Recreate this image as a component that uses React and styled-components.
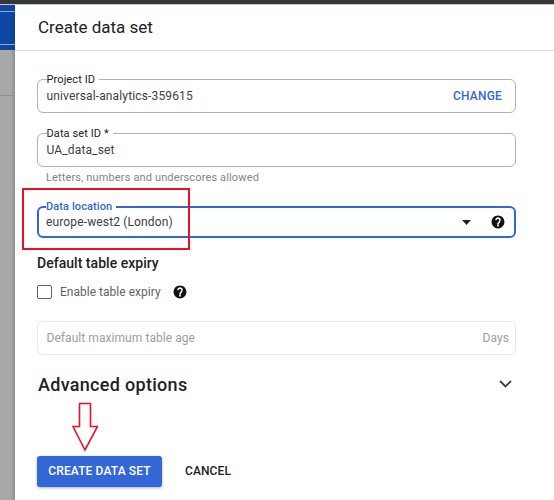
import React from "react";
import styled, { createGlobalStyle } from "styled-components";

const Global = createGlobalStyle`
  html, body { margin: 0; padding: 0; background: #fff; }
  * { box-sizing: border-box; }
  body { font-family: Roboto, "Liberation Sans", sans-serif; color: #202124; }
`;
const Page = styled.div`
  position: relative; width: 554px; height: 500px; overflow: hidden;
  display: flex; flex-direction: column;
`;
const TopBar = styled.div`height: 5px; background: #36373b; flex: none; border-bottom: 1px solid #c9c9cb;`;
const Main = styled.div`flex: 1; display: flex; min-height: 0;`;
const Backdrop = styled.div`
  width: 15px; flex: none; display: flex; flex-direction: column;
  background: linear-gradient(90deg, #a8a8a8 0 11px, #8e8e8e 15px);
`;
const BlueBand = styled.div`
  height: 45px; flex: none; padding-top: 6px;
  background: linear-gradient(90deg, #0d47a1 0 11px, #0b3f8f 15px);
`;
const BlueLine = styled.div`height: 1px; background: #8fa8d0; margin-bottom: ${p => p.$gap || 0}px;`;
const GrayLine = styled.div`height: 1px; margin-top: 45px; background: #8f8f8f;`;
const Panel = styled.main`flex: 1; background: #fff; display: flex; flex-direction: column;`;
const Header = styled.header`
  height: 46px; flex: none; border-bottom: 1px solid #dadce0;
  padding: 9px 0 0 23px;
`;
const Title = styled.h1`margin: 0; font: 400 17px/26px Roboto, sans-serif; color: #202124;`;
const Body = styled.div`display: flex; flex-direction: column; padding: 22px 38px 0 22px;`;

const Field = styled.fieldset`
  margin: ${p => p.$top || 0}px 0 0; padding: 0 ${p => p.$off ? 6 : 8}px ${p => p.$pad ?? 6}px ${p => p.$focus ? 7 : 8.500}px;
  min-width: 0;
  border: ${p => p.$focus ? "2px solid #3367d6" : `1px solid ${p.$off ? "#e8eaed" : "#b0b1b4"}`};
  border-radius: 6px;
`;
const Legend = styled.legend`
  margin-left: 0; padding: 0 4px 0 0; height: 13px;
  font: ${p => p.$focus ? 500 : 400} 11px/13px Roboto, sans-serif; letter-spacing: .1px;
  color: ${p => p.$focus ? "#3367d6" : "#202124"};
`;
const FieldRow = styled.div`display: flex; align-items: center; justify-content: space-between; height: ${p => p.$h || 20}px;`;
const Value = styled.span`font: 400 12px/16px Roboto, sans-serif; color: #3c4043; letter-spacing: .14px;`;
const Dim = styled(Value)`color: #9aa0a6; letter-spacing: .06px;`;
const Change = styled.button`
  border: 0; background: none; padding: 0 5px 0 0; color: #3367d6; cursor: pointer;
  font: 500 12px/16px Roboto, sans-serif; letter-spacing: .2px;
`;
const Hint = styled.div`margin: 4px 0 0 9px; font: 400 11px/14px Roboto, sans-serif; color: #80868b; letter-spacing: .14px;`;
const Trail = styled.span`display: flex; align-items: center; gap: 20px; padding-right: 1px; color: #202124;`;
const SubTitle = styled.h2`margin: 16px 0 0; font: 500 14px/18px Roboto, sans-serif; letter-spacing: .03px; color: #202124;`;
const CheckRow = styled.label`display: flex; align-items: center; margin-top: 13px; height: 14px;`;
const CheckBox = styled.span`width: 15px; height: 14px; border: 1.500px solid #5f6368; border-radius: 2px; flex: none;`;
const CheckText = styled.span`margin: 0 12px 0 8px; font: 400 12px/14px Roboto, sans-serif; color: #5f6368; letter-spacing: .02px;`;
const Advanced = styled.div`margin-top: 18px; height: 24px; display: flex; align-items: center; justify-content: space-between; padding: 0 4px 0 1px;`;
const AdvancedTitle = styled.h2`margin: 0; font: 500 18px/24px Roboto, sans-serif; letter-spacing: .3px; color: #202124;`;
const Chevron = styled.svg`margin-top: -2px;`;
const Actions = styled.div`margin-top: 59px; display: flex; align-items: center; gap: 23px;`;
const Primary = styled.button`
  width: 125px; height: 31px; border: 0; border-radius: 3px; background: #3367d6; color: #fff;
  font: 500 12px/16px Roboto, sans-serif; letter-spacing: .12px; padding: 0 0 1px;
  box-shadow: 0 1px 3px rgba(60,64,67,.4);
`;
const Cancel = styled.button`border: 0; background: none; padding: 0 0 1px; color: #202124; font: 500 12px/16px Roboto, sans-serif; letter-spacing: .1px;`;
const RedBox = styled.div`
  position: absolute; left: 22px; top: 188px; width: 167.500px; height: 61.500px;
  border: 2px solid #ee0f24; pointer-events: none;
`;
const Arrow = styled.svg`position: absolute; left: 72px; top: 402px; width: 26px; height: 50px;`;

const Help = () => (
  <svg width="14" height="14" viewBox="0 0 24 24" aria-hidden="true">
    <path fill="#111" d="M12 1C5.900 1 1 5.900 1 12s4.900 11 11 11 11-4.900 11-11S18.100 1 12 1zm1.400 18.500h-2.800v-2.800h2.800v2.800zm2.400-7.400l-1 1c-.900.900-1.300 1.500-1.300 3h-2.800v-.6c0-1.300.5-2.400 1.300-3.200l1.500-1.500c.4-.4.700-1 .700-1.600 0-1.300-1-2.300-2.300-2.300s-2.300 1-2.300 2.300H7.300C7.300 5.700 9.400 3.800 12 3.800s4.700 1.900 4.700 4.400c0 1.100-.3 2.100-.9 2.900z" />
  </svg>
);

export default function App() {
  return (
    <Page>
      <Global />
      <TopBar />
      <Main>
        <Backdrop>
          <BlueBand>
            <BlueLine $gap={32} />
            <BlueLine />
          </BlueBand>
          <GrayLine />
        </Backdrop>
        <Panel>
          <Header><Title>Create data set</Title></Header>
          <Body>
            <Field>
              <Legend>Project ID</Legend>
              <FieldRow>
                <Value>universal-analytics-359615</Value>
                <Change>CHANGE</Change>
              </FieldRow>
            </Field>
            <Field $top={14}>
              <Legend>Data set ID *</Legend>
              <FieldRow><Value>UA_data_set</Value></FieldRow>
            </Field>
            <Hint>Letters, numbers and underscores allowed</Hint>
            <Field $focus $top={15} $pad={5}>
              <Legend $focus>Data location</Legend>
              <FieldRow $h={18}>
                <Value>europe-west2 (London)</Value>
                <Trail>
                  <svg width="9" height="5" viewBox="0 0 9 5" aria-hidden="true"><path d="M0 0h9L4.500 5z" fill="#202124" /></svg>
                  <Help />
                </Trail>
              </FieldRow>
            </Field>
            <SubTitle>Default table expiry</SubTitle>
            <CheckRow>
              <CheckBox />
              <CheckText>Enable table expiry</CheckText>
              <Help />
            </CheckRow>
            <Field $off $top={22} $pad={0}>
              <FieldRow $h={32}>
                <Dim>Default maximum table age</Dim>
                <Dim>Days</Dim>
              </FieldRow>
            </Field>
            <Advanced>
              <AdvancedTitle>Advanced options</AdvancedTitle>
              <Chevron width="13" height="8" viewBox="0 0 13 8" fill="none" aria-hidden="true"><path d="M1 1l5.500 5.500L12 1" stroke="#3c4043" strokeWidth="1.800" /></Chevron>
            </Advanced>
            <Actions>
              <Primary>CREATE DATA SET</Primary>
              <Cancel>CANCEL</Cancel>
            </Actions>
          </Body>
        </Panel>
      </Main>
      <RedBox />
      <Arrow viewBox="0 0 26 50" aria-hidden="true">
        <path d="M7.500 1.500h11v23h7L13 48 1 24.500h6.500z" fill="#fff" stroke="#ee0f24" strokeWidth="1.600" />
      </Arrow>
    </Page>
  );
}
